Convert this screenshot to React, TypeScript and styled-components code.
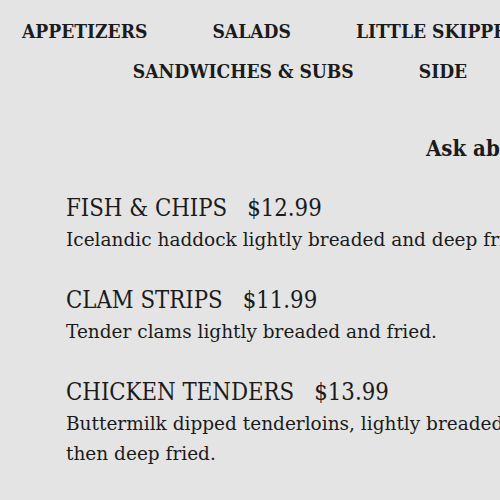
import React from "react";
import styled, { createGlobalStyle } from "styled-components";

const navRows = [
  { align: "start", items: ["APPETIZERS", "SALADS", "LITTLE SKIPPERS"] },
  { align: "center", items: ["SANDWICHES & SUBS", "SIDE"] },
];

const menu = [
  {
    name: "FISH & CHIPS",
    price: "$12.99",
    desc: "Icelandic haddock lightly breaded and deep fried.",
  },
  {
    name: "CLAM STRIPS",
    price: "$11.99",
    desc: "Tender clams lightly breaded and fried.",
  },
  {
    name: "CHICKEN TENDERS",
    price: "$13.99",
    desc: "Buttermilk dipped tenderloins, lightly breaded and then deep fried.",
  },
];

const GlobalStyle = createGlobalStyle`
  html, body {
    margin: 0;
    background: #e4e4e4;
    overflow: hidden;
  }
  body {
    font-family: "DejaVu Serif", "Liberation Serif", serif;
    color: #1b1b1b;
  }
`;

export default function App() {
  return (
    <>
      <GlobalStyle />
      <Page>
        <Nav>
          {navRows.map((row, i) => (
            <NavRow key={i} $align={row.align}>
              {row.items.map((item) => (
                <NavItem key={item}>{item}</NavItem>
              ))}
            </NavRow>
          ))}
        </Nav>
        <Notice>Ask about our daily specials!</Notice>
        <MenuList>
          {menu.map((m) => (
            <Item key={m.name}>
              <Title>
                {m.name}
                <Price>{m.price}</Price>
              </Title>
              <Desc>{m.desc}</Desc>
            </Item>
          ))}
        </MenuList>
      </Page>
    </>
  );
}

const Page = styled.div`
  width: 600px;
`;

const Nav = styled.nav`
  display: flex;
  flex-direction: column;
  padding-top: 12px;
`;

const NavRow = styled.div<{ $align: string }>`
  display: flex;
  justify-content: ${(p) => (p.$align === "start" ? "flex-start" : "center")};
  padding-left: ${(p) => (p.$align === "start" ? "22px" : "0")};
  column-gap: 65px;
  white-space: nowrap;
`;

const NavItem = styled.span`
  font-family: "DejaVu Serif Condensed", "DejaVu Serif", serif;
  font-stretch: condensed;
  font-weight: 700;
  font-size: 19.1px;
  line-height: 40px;
`;

const Notice = styled.div`
  margin-top: 41px;
  padding-left: 426px;
  font-family: "DejaVu Serif Condensed", "DejaVu Serif", serif;
  font-stretch: condensed;
  font-weight: 700;
  font-size: 22px;
  line-height: 30px;
  white-space: nowrap;
`;

const MenuList = styled.div`
  margin-top: 30px;
  padding-left: 66px;
`;

const Item = styled.div`
  margin-bottom: 30px;
`;

const Title = styled.div`
  font-family: "DejaVu Serif Condensed", "DejaVu Serif", serif;
  font-stretch: condensed;
  font-size: 23.7px;
  line-height: 30px;
  margin-bottom: 2px;
  white-space: nowrap;
`;

const Price = styled.span`
  margin-left: 20px;
`;

const Desc = styled.div`
  font-size: 18.5px;
  line-height: 30px;
  width: 500px;
`;
